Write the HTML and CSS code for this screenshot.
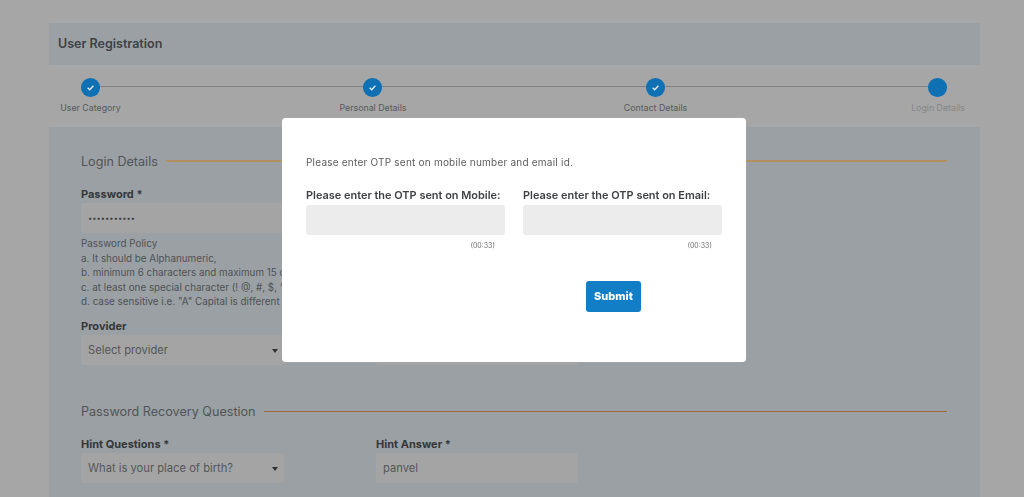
FILE: index.html
```html
<!DOCTYPE html>
<html lang="en">
<head>
<meta charset="utf-8">
<title>User Registration</title>
<link rel="stylesheet" href="styles.css">
</head>
<body>
<main class="page">
  <header class="page-head"><h1>User Registration</h1></header>
  <section class="stepper">
    <div class="track">
      <span class="dot"><svg viewBox="0 0 10 10" class="tick"><path d="M2.4 5.2 4.3 7 7.6 3.4"/></svg></span>
      <span class="bar"></span>
      <span class="dot"><svg viewBox="0 0 10 10" class="tick"><path d="M2.4 5.2 4.3 7 7.6 3.4"/></svg></span>
      <span class="bar"></span>
      <span class="dot"><svg viewBox="0 0 10 10" class="tick"><path d="M2.4 5.2 4.3 7 7.6 3.4"/></svg></span>
      <span class="bar"></span>
      <span class="dot"></span>
    </div>
    <div class="step-labels">
      <span>User Category</span>
      <span>Personal Details</span>
      <span>Contact Details</span>
      <span class="pending">Login Details</span>
    </div>
  </section>
  <section class="panel">
    <div class="section-title thick"><h2>Login Details</h2><span class="rule"></span></div>
    <div class="form-grid">
      <div class="field">
        <label>Password *</label>
        <div class="box dots">•••••••••••</div>
        <div class="policy">
          <p>Password Policy</p>
          <p>a. It should be Alphanumeric,</p>
          <p>b. minimum 6 characters and maximum 15 characters,</p>
          <p>c. at least one special character (! @, #, $, %),</p>
          <p>d. case sensitive i.e. "A" Capital is different</p>
        </div>
      </div>
    </div>
    <div class="form-grid provider-row">
      <div class="field">
        <label>Provider</label>
        <div class="box select">Select provider</div>
      </div>
      <div class="field">
        <label>&nbsp;</label>
        <div class="box"></div>
      </div>
    </div>
    <div class="section-title recovery"><h2>Password Recovery Question</h2><span class="rule"></span></div>
    <div class="form-grid hint-row">
      <div class="field">
        <label>Hint Questions *</label>
        <div class="box select">What is your place of birth?</div>
      </div>
      <div class="field">
        <label>Hint Answer *</label>
        <div class="box">panvel</div>
      </div>
    </div>
  </section>
</main>
<div class="modal" role="dialog">
  <p class="modal-msg">Please enter OTP sent on mobile number and email id.</p>
  <div class="otp-row">
    <div class="otp">
      <label>Please enter the OTP sent on Mobile:</label>
      <div class="otp-box"></div>
      <span class="timer">(00:33)</span>
    </div>
    <div class="otp">
      <label>Please enter the OTP sent on Email:</label>
      <div class="otp-box"></div>
      <span class="timer">(00:33)</span>
    </div>
  </div>
  <div class="actions"><button class="submit" type="button">Submit</button></div>
</div>
</body>
</html>
```
FILE: styles.css
```css
* { box-sizing: border-box; }
html, body { margin: 0; height: 497px; overflow: hidden; }
body {
  background: #a6a6a6;
  font-family: "Inter", "Noto Sans", sans-serif;
  color: #444;
}
h1, h2, p { margin: 0; font-weight: 400; }

.page { margin: 0 44px 0 49px; padding-top: 23px; }
.page-head {
  height: 42px;
  background: #9aa0a4;
  padding: 0 9px 2px;
  display: flex;
  align-items: center;
}
.page-head h1 { font-size: 12.5px; font-weight: 600; color: #3f4144; }

.stepper { height: 62px; padding-top: 13px; }
.track {
  display: flex;
  align-items: center;
  padding: 0 33px 0 32px;
}
.dot {
  width: 18.6px;
  height: 18.6px;
  border-radius: 50%;
  background: #1070b4;
  flex: none;
  display: flex;
  align-items: center;
  justify-content: center;
}
.tick { width: 11px; height: 11px; fill: none; stroke: #dfe6ea; stroke-width: 1.3; }
.bar { flex: 1; height: 1px; background: #7f8184; margin-top: -1px; }
.step-labels {
  display: flex;
  justify-content: space-between;
  padding: 0 2px 0 1.5px;
  margin-top: 5px;
}
.step-labels span {
  width: 80px;
  text-align: center;
  font-size: 8.8px;
  line-height: 12px;
  color: #58595b;
}
.step-labels .pending { color: #85878a; }

.panel {
  background: #9aa0a4;
  padding: 24px 33px 0 32px;
  height: 370px;
}
.section-title { display: flex; align-items: center; gap: 8px; height: 20px; }
.section-title h2 { font-size: 12.6px; color: #525558; white-space: nowrap; }
.rule { flex: 1; height: 1px; background: #9b6b38; }
.thick .rule { height: 2px; background: #b0905f; }

.form-grid {
  display: grid;
  grid-template-columns: 203px 202px;
  column-gap: 92px;
  margin-top: 16px;
}
.provider-row { margin-top: 10px; }
.hint-row { margin-top: 15px; }
.recovery { margin-top: 37px; }
.field label {
  display: block;
  font-size: 11px;
  line-height: 14px;
  font-weight: 700;
  color: #35373a;
}
.box {
  height: 30px;
  margin-top: 2px;
  background: #a4a4a4;
  border-radius: 3px;
  padding: 0 7px;
  display: flex;
  align-items: center;
  font-size: 11.2px;
  color: #55575a;
}
.dots { color: #3d3d3d; font-size: 7.6px; }
.select { position: relative; }
.select::after {
  content: "";
  position: absolute;
  right: 6px;
  top: 14px;
  border-left: 3px solid transparent;
  border-right: 3px solid transparent;
  border-top: 4px solid #2f3033;
}
.policy { margin-top: 3px; font-size: 9.85px; line-height: 14.6px; color: #4f5255; white-space: nowrap; }

.modal {
  position: fixed;
  left: 282px;
  top: 118px;
  width: 464px;
  height: 244px;
  background: #fff;
  border-radius: 4px;
  padding: 38px 24px 0;
  color: #555;
  box-shadow: 0 0 1px #c4c4c4;
}
.modal-msg { font-size: 10px; line-height: 13px; color: #5c5c5c; letter-spacing: .22px; }
.otp-row {
  display: grid;
  grid-template-columns: 199px 199px;
  column-gap: 18px;
  margin-top: 19px;
}
.otp label {
  display: block;
  font-size: 10.95px;
  line-height: 14px;
  font-weight: 600;
  color: #3f4144;
  white-space: nowrap;
}
.otp-box { height: 30px; margin-top: 3px; background: #ececec; border-radius: 3px; }
.timer {
  display: block;
  text-align: right;
  padding-right: 10px;
  margin-top: 6px;
  font-size: 7px;
  line-height: 10px;
  color: #6f6f6f;
}
.actions { display: flex; margin-top: 30px; padding-left: 280px; }
.submit {
  width: 55px;
  height: 31px;
  border: 0;
  border-radius: 3px;
  background: #117ec5;
  color: #fff;
  font-family: "Inter", sans-serif;
  font-size: 11px;
  font-weight: 800;
  padding: 0 0 2px;
}
```
